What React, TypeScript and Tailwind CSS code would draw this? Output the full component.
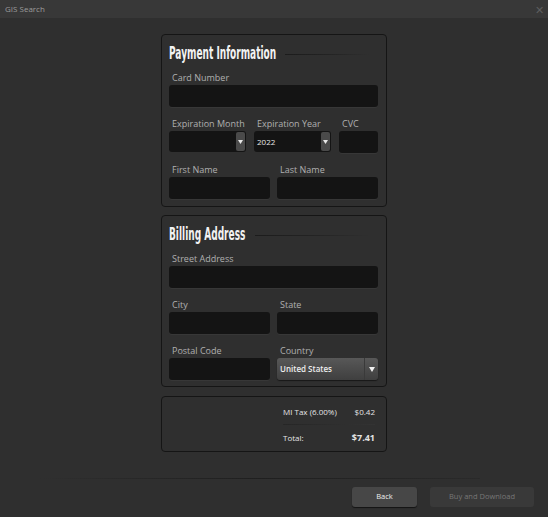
import React from 'react';

const ui = { fontFamily: '"Open Sans", "Noto Sans", sans-serif' };
const heading = { fontFamily: '"DejaVu Sans", sans-serif' };

const Label: React.FC<{ text: string }> = ({ text }) => (
  <div className="h-[15px] whitespace-nowrap pl-[3px] text-[9px] leading-[15px] text-[#b0b0b0]">{text}</div>
);

const Input: React.FC<{ h?: string }> = ({ h = 'h-[22px]' }) => (
  <div className={`${h} w-full rounded-[3px] bg-[#141414] shadow-[0_1px_0_rgba(255,255,255,0.04)]`} />
);

const Caret = () => (
  <svg width="5" height="4" viewBox="0 0 5 4">
    <path d="M0 0 L5 0 L2.5 4 Z" fill="#e8e8e8" />
  </svg>
);

const Select: React.FC<{ value?: string }> = ({ value }) => (
  <div className="flex h-[21px] w-full items-center rounded-[3px] bg-[#141414] pl-[3px] pr-[1px]">
    <span className="flex-1 text-[8px] text-[#e6e6e6]">{value}</span>
    <div className="flex h-[19px] w-[9px] items-center justify-center rounded-[2px] bg-[#4a4a4a]">
      <Caret />
    </div>
  </div>
);

const SectionTitle: React.FC<{ text: string; w: string }> = ({ text, w }) => (
  <div className="flex h-[35px] items-center gap-[8px] pt-[3px]">
    <span className={`${w} shrink-0 overflow-visible whitespace-nowrap`}>
      <span
        className="inline-block origin-left scale-x-[0.53] text-[17px] font-bold text-[#f2f2f2]"
        style={heading}
      >
        {text}
      </span>
    </span>
    <div className="mr-[8px] h-px flex-1 bg-gradient-to-r from-[#1c1c1c] via-[#232323] to-transparent" />
  </div>
);

const Panel: React.FC<{ children: React.ReactNode; className?: string }> = ({ children, className = '' }) => (
  <div className={`w-[226px] rounded-[4px] border border-[#151515] bg-[#2f2f2f] pl-[7px] pr-[8px] ${className}`}>
    {children}
  </div>
);

export default function App() {
  return (
    <div className="flex h-[517px] w-[548px] flex-col bg-[#2f2f2f]" style={ui}>
      {/* title bar */}
      <div className="flex h-[18px] items-center justify-between bg-[#383838] pl-[5px] pr-[4px]">
        <span className="text-[8px] text-[#9c9c9c]">GIS Search</span>
        <span className="text-[11px] leading-none text-[#5e5e5e]">✕</span>
      </div>

      <div className="flex flex-1 flex-col items-center pt-[16px]">
        {/* payment */}
        <Panel className="pb-[7px]">
          <SectionTitle text="Payment Information" w="w-[108px]" />
          <Label text="Card Number" />
          <Input />
          <div className="mt-[9px] flex gap-[8px]">
            <div className="w-[77px]">
              <Label text="Expiration Month" />
              <Select />
            </div>
            <div className="w-[77px]">
              <Label text="Expiration Year" />
              <Select value="2022" />
            </div>
            <div className="flex-1">
              <Label text="CVC" />
              <Input h="h-[22px]" />
            </div>
          </div>
          <div className="mt-[9px] grid grid-cols-2 gap-[7px]">
            <div>
              <Label text="First Name" />
              <Input />
            </div>
            <div>
              <Label text="Last Name" />
              <Input />
            </div>
          </div>
        </Panel>

        {/* billing */}
        <Panel className="mt-[8px] pb-[6px]">
          <SectionTitle text="Billing Address" w="w-[78px]" />
          <Label text="Street Address" />
          <Input />
          <div className="mt-[9px] grid grid-cols-2 gap-[7px]">
            <div>
              <Label text="City" />
              <Input />
            </div>
            <div>
              <Label text="State" />
              <Input />
            </div>
          </div>
          <div className="mt-[9px] grid grid-cols-2 gap-[7px]">
            <div>
              <Label text="Postal Code" />
              <Input />
            </div>
            <div>
              <Label text="Country" />
              <div className="flex h-[22px] items-center rounded-[3px] bg-gradient-to-b from-[#585858] to-[#3f3f3f] shadow-[0_1px_1px_rgba(0,0,0,0.5)]">
                <span className="flex-1 pl-[3px] text-[8px] font-semibold text-[#ededed]">United States</span>
                <div className="flex h-full w-[14px] items-center justify-center border-l border-[#3a3a3a]">
                  <svg width="6" height="5" viewBox="0 0 6 5">
                    <path d="M0 0 L6 0 L3 5 Z" fill="#f0f0f0" />
                  </svg>
                </div>
              </div>
            </div>
          </div>
        </Panel>

        {/* totals */}
        <Panel className="mt-[9px] h-[56px]">
          <div className="ml-[114px] mr-[3px] flex h-full flex-col">
            <div className="flex h-[27px] items-center justify-between pt-[2px] text-[8px] text-[#e4e4e4]">
              <span>MI Tax (6.00%)</span>
              <span>$0.42</span>
            </div>
            <div className="h-px bg-gradient-to-r from-[#262626] to-[#333333]" />
            <div className="flex flex-1 items-center justify-between text-[#e4e4e4]">
              <span className="text-[8px]">Total:</span>
              <span className="text-[9px] font-bold">$7.41</span>
            </div>
          </div>
        </Panel>

        <div className="ml-[40px] mt-[26px] h-px w-[440px] self-start bg-gradient-to-r from-[#2f2f2f] via-[#1f1f1f] to-[#2a2a2a]" />

        <div className="mt-[8px] flex w-full justify-end gap-[13px] pr-[14px]">
          <button className="h-[20px] w-[65px] rounded-[3px] bg-[#474747] text-[7.5px] text-[#eeeeee] shadow-[0_1px_1px_rgba(0,0,0,0.6)]">
            Back
          </button>
          <button className="h-[20px] w-[104px] rounded-[3px] bg-[#393939] text-[7.5px] text-[#777777]">
            Buy and Download
          </button>
        </div>
      </div>
    </div>
  );
}
